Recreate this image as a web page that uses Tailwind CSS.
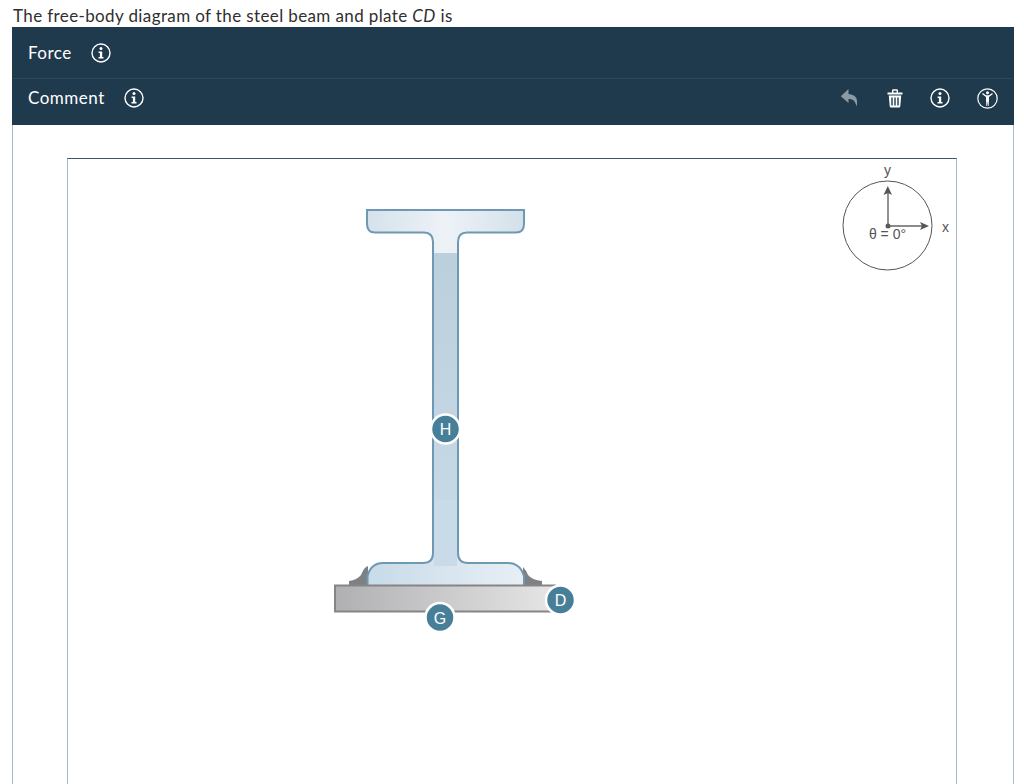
<!DOCTYPE html>
<html><head><meta charset="utf-8"><script src="https://cdn.jsdelivr.net/npm/@tailwindcss/browser@4"></script></head>
<body class="bg-white h-[784px] overflow-hidden font-['Lato','Liberation_Sans',sans-serif] text-[#333]">
<div class="px-3">
  <p class="h-[27px] pl-px pt-[6px] text-[17px] leading-[20px] tracking-[0.38px] whitespace-nowrap text-[#2f2f2f]">The free-body diagram of the steel beam and plate <i>CD</i> is</p>
  <div class="w-[1002px] h-[757px] border-x border-[#a9bcc9] flex flex-col">
    <div class="-mx-px h-[98px] shrink-0 bg-[#1f3a4d] text-white text-[17px] tracking-[0.5px] flex flex-col">
      <div class="h-[52px] mx-px border-b border-[#2b4a58] flex items-center pl-[15px] gap-[19px]">
        <span>Force</span>
        <svg class="w-5 h-5" viewBox="0 0 20 20" fill="none"><circle cx="10" cy="10" r="9" stroke="#fff" stroke-width="1.4"/><circle cx="10" cy="5.6" r="1.5" fill="#fff"/><path d="M7.6 8.5h3.6v5.6h1.3v1.4H7.5v-1.4h1.400V9.900H7.600z" fill="#fff"/></svg>
      </div>
      <div class="flex-1 flex items-center pl-4 pr-4 pb-2 gap-[19px]">
        <span>Comment</span>
        <svg class="w-5 h-5" viewBox="0 0 20 20" fill="none"><circle cx="10" cy="10" r="9" stroke="#fff" stroke-width="1.4"/><circle cx="10" cy="5.6" r="1.5" fill="#fff"/><path d="M7.6 8.5h3.6v5.6h1.3v1.4H7.5v-1.4h1.400V9.900H7.600z" fill="#fff"/></svg>
        <div class="ml-auto flex items-center gap-[27px]">
          <svg class="w-5 h-5" viewBox="0 0 20 20"><path d="M8.500 1 .8 8.200l7.700 6.800v-4c4 0 6.500 1 8 7.500 2-7-.5-12-8-12.500z" fill="#8a9ba6"/></svg>
          <svg class="w-[16px] h-5" viewBox="0 0 16 20"><path d="M0.500 4.500h15v2H.5zM5 4.500V2.500q0-1.300 1.300-1.300h3.400q1.300 0 1.300 1.300v2H9.600V2.700H6.400v1.800z" fill="#fff"/><path d="M1.800 7.500h12.400l-.9 10.700q-.1 1.300-1.400 1.300H4.100q-1.300 0-1.400-1.300z" fill="#fff"/><path d="M5 9.500v8M8 9.500v8M11 9.500v8" stroke="#1f3a4d" stroke-width="1.400"/></svg>
          <svg class="w-5 h-5" viewBox="0 0 20 20" fill="none"><circle cx="10" cy="10" r="9" stroke="#fff" stroke-width="1.4"/><circle cx="10" cy="5.6" r="1.5" fill="#fff"/><path d="M7.6 8.5h3.6v5.6h1.3v1.4H7.5v-1.4h1.400V9.900H7.600z" fill="#fff"/></svg>
          <svg class="w-[21px] h-[21px]" viewBox="0 0 21 21" fill="none"><circle cx="10.500" cy="10.500" r="9.700" stroke="#fff" stroke-width="1.200"/><circle cx="10.500" cy="4.800" r="1.500" fill="#fff"/><path d="M5.500 5.500 8.800 8h3.400l3.300-2.500" stroke="#fff" stroke-width="1.300"/><path d="M9 8h3v4l-.4 6h-.7l-.4-5-.4 5h-.7L9 12z" fill="#fff"/></svg>
        </div>
      </div>
    </div>
    <div class="pt-[33px] pl-[54px]">
      <div class="relative w-[890px] h-[640px] border-x border-t border-x-[#a9bcc9] border-t-[#3b5668]">
        <svg class="absolute -left-px -top-px" width="890" height="627" viewBox="67 158 890 627">
          <defs>
            <linearGradient id="fl" x1="0" x2="1" y1="0" y2="0"><stop offset="0" stop-color="#d5e2eb"/><stop offset=".5" stop-color="#edf2f6"/><stop offset="1" stop-color="#d3e1ea"/></linearGradient>
            <linearGradient id="web" x1="0" x2="0" y1="0" y2="1"><stop offset="0" stop-color="#bccfdd"/><stop offset=".45" stop-color="#c2d4e2"/><stop offset="1" stop-color="#c9dbe8"/></linearGradient>
            <linearGradient id="bot" x1="0" x2="1" y1="0" y2="0"><stop offset="0" stop-color="#c8dbe8"/><stop offset="1" stop-color="#e8eff5"/></linearGradient>
            <linearGradient id="pl" x1="0" x2="1" y1="0" y2="0"><stop offset="0" stop-color="#b0b0b3"/><stop offset="1" stop-color="#e6e6e6"/></linearGradient>
          </defs>
          <path d="M367 210H524V224Q524 232.500 516 232.500H467Q458 232.500 458 242V253H433V242Q433 232.500 424 232.500H375Q367 232.500 367 224Z" fill="url(#fl)"/>
          <rect x="433" y="253" width="25" height="310" fill="url(#web)"/>
          <path d="M433 500V553Q433 563 423 563H383Q371 563 368 576V585H524V576Q521 563 508 563H468Q458 563 458 553V500Z" fill="url(#bot)"/>
          <rect x="434" y="500" width="23" height="66" fill="#c9dbe8"/>
          <path d="M349 585V581Q357 580 361 575Q364 567 368 566V585Z" fill="#7e8083"/>
          <path d="M542 585V581Q532 580 528 575Q526 570 523 567V585Z" fill="#7e8083"/>
          <path d="M524 585V576Q520 563 508 563H468Q458 563 458 553V242Q458 232.500 467 232.500H516Q524 232.500 524 224V210H367V224Q367 232.500 375 232.500H424Q433 232.500 433 242V553Q433 563 423 563H383Q371 563 367.500 576V585" fill="none" stroke="#6e98b3" stroke-width="2"/>
          <rect x="335" y="585.500" width="222" height="26" fill="url(#pl)"/>
          <path d="M556 585.500H335V611.500H552" fill="none" stroke="#858588" stroke-width="2"/>
          <g font-family="Liberation Sans, Arial, sans-serif" font-size="16" fill="#fff" text-anchor="middle">
            <circle cx="445.500" cy="429" r="14.500" fill="#477f99" stroke="#fff" stroke-width="2.500"/><text x="445.500" y="435">H</text>
            <circle cx="560.500" cy="600" r="14.500" fill="#477f99" stroke="#fff" stroke-width="2.500"/><text x="560.500" y="606">D</text>
            <circle cx="440" cy="617.500" r="14.500" fill="#477f99" stroke="#fff" stroke-width="2.500"/><text x="440" y="623.500">G</text>
          </g>
          <circle cx="887.500" cy="225.500" r="44.500" fill="none" stroke="#555" stroke-width="1"/>
          <g font-family="Liberation Sans, Arial, sans-serif" font-size="14" fill="#555">
            <text x="887.500" y="175" text-anchor="middle">y</text>
            <text x="945.500" y="232" text-anchor="middle">x</text>
            <text x="887.500" y="239" text-anchor="middle">θ = 0°</text>
          </g>
          <path d="M888 226V190M888 226H924" stroke="#666" stroke-width="1.400"/>
          <path d="M887.800 186 892 195 888 193 883.500 195Z M929 226 920 222 922 226 920 230Z" fill="#555"/>
          <circle cx="888" cy="226" r="2.500" fill="#5a5a5a"/>
        </svg>
      </div>
    </div>
  </div>
</div>
</body></html>
